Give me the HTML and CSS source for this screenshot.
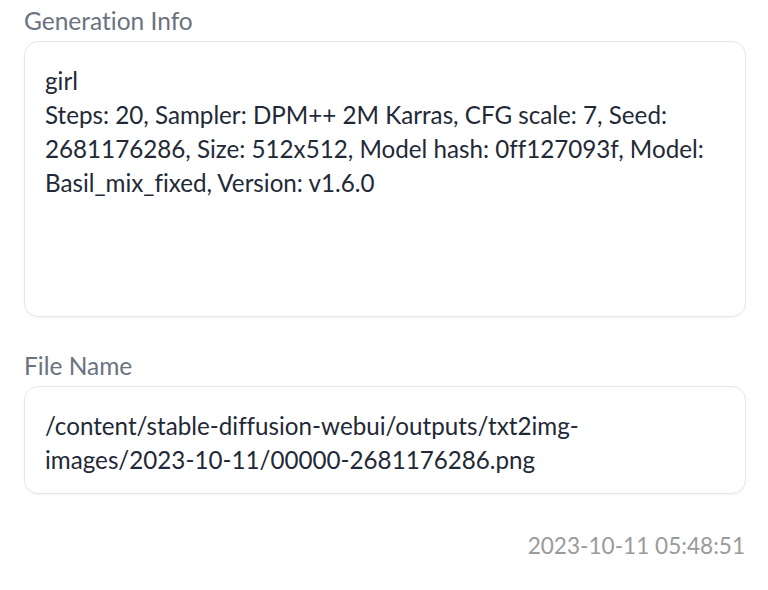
FILE: index.html
```html
<!DOCTYPE html>
<html>
<head>
<meta charset="utf-8">
<link rel="stylesheet" href="styles.css">
</head>
<body>
<div class="panel">
  <div class="field">
    <div class="label">Generation Info</div>
    <div class="box box-info">girl<br>Steps: 20, Sampler: DPM++ 2M Karras, CFG scale: 7, Seed:<br>2681176286, Size: 512x512, Model hash: 0ff127093f, Model:<br>Basil_mix_fixed, Version: v1.6.0</div>
  </div>
  <div class="field field-file">
    <div class="label">File Name</div>
    <div class="box box-file">/content/stable-diffusion-webui/outputs/txt2img-<br>images/2023-10-11/00000-2681176286.png</div>
  </div>
  <div class="stamp">2023-10-11 05:48:51</div>
</div>
</body>
</html>
```
FILE: styles.css
```css
html, body {
  margin: 0;
  padding: 0;
  background: #ffffff;
}
body {
  font-family: "Lato", "Open Sans", sans-serif;
  font-variant-ligatures: none;
}
.panel {
  display: flex;
  flex-direction: column;
  padding: 6px 22px 0 24px;
}
.label {
  font-size: 24.5px;
  line-height: 30px;
  color: #6b7280;
  margin-bottom: 5px;
}
.box {
  border: 1px solid #e5e7eb;
  border-radius: 14px;
  box-shadow: 0 1px 2px rgba(0,0,0,0.05);
  padding: 22px 20px 18px;
  font-size: 24.2px;
  line-height: 34px;
  color: #1f2937;
  white-space: nowrap;
}
.box-info {
  height: 234px;
}
.field-file {
  margin-top: 34px;
}
.box-file {
  padding: 22px 20px 16px;
  height: 68px;
}
.stamp {
  margin-top: 38px;
  text-align: right;
  font-size: 22.6px;
  color: #9a9a9a;
  padding-right: 1px;
}
```
